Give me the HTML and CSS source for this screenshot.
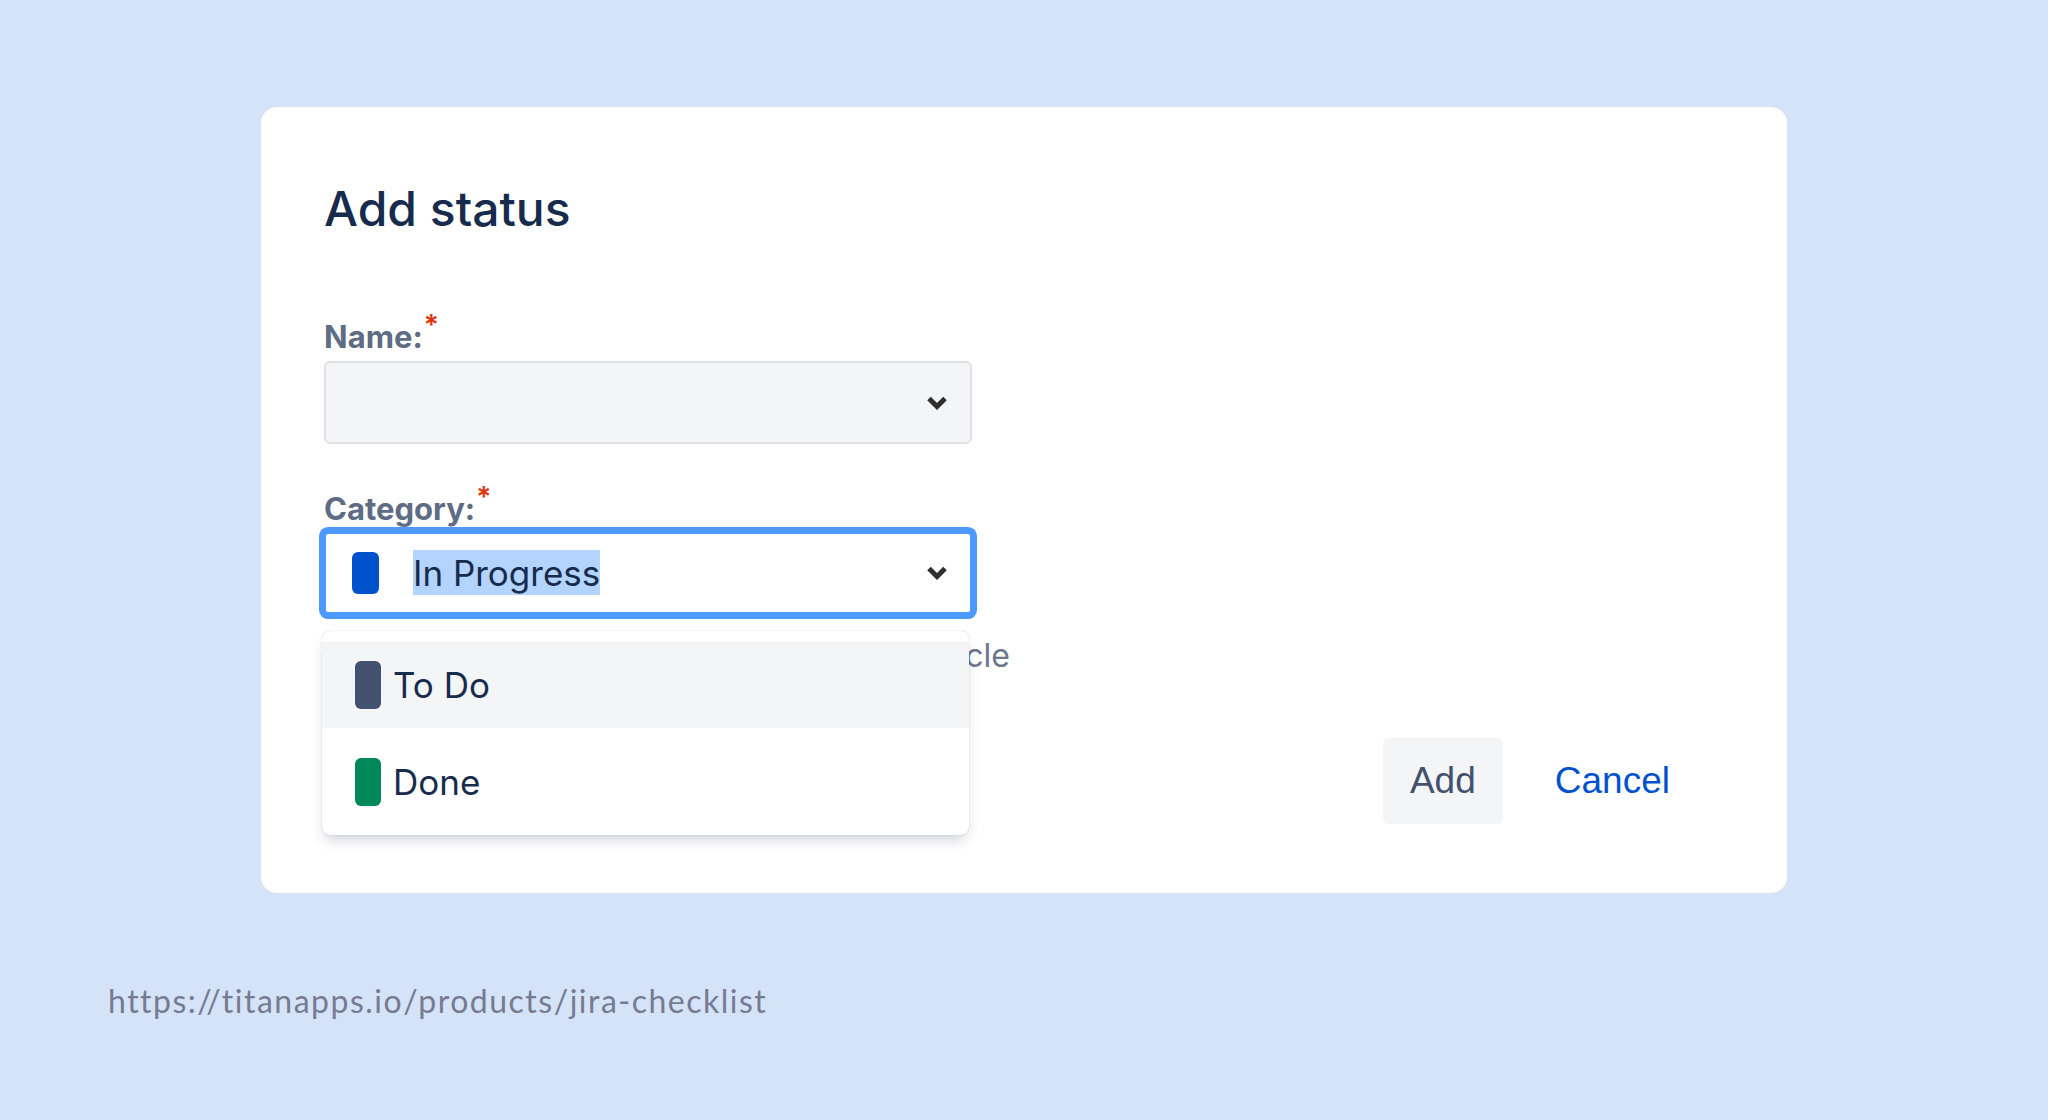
FILE: index.html
```html
<!DOCTYPE html>
<html lang="en">
<head>
    <meta charset="UTF-8">
    <meta name="viewport" content="width=device-width, initial-scale=1.0">
    <title>Add status</title>
    <link rel="stylesheet" href="styles.css">
</head>
<body>
    <div class="page">
        <section class="dialog">
            <h1 class="dialog-title">Add status</h1>

            <div class="field">
                <label class="field-label" for="statusName">Name:<span class="required">*</span></label>
                <div class="select" id="statusName">
                    <span class="select-value"></span>
                    <svg class="chevron" viewBox="0 0 22 16" width="22" height="16">
                        <polyline points="3,3.5 11,11.5 19,3.5" fill="none" stroke="#2f2f2f" stroke-width="5"/>
                    </svg>
                </div>
            </div>

            <div class="field field-category">
                <label class="field-label" for="statusCategory">Category:<span class="required">*</span></label>
                <div class="select select-focused" id="statusCategory">
                    <span class="swatch swatch-progress"></span>
                    <span class="select-value"><span class="selected-text">In Progress</span></span>
                    <svg class="chevron" viewBox="0 0 22 16" width="22" height="16">
                        <polyline points="3,3.5 11,11.5 19,3.5" fill="none" stroke="#2f2f2f" stroke-width="5"/>
                    </svg>
                </div>
                <p class="field-help">Category shows the stage in the lifecycle</p>

                <ul class="menu">
                    <li class="menu-item is-active"><span class="swatch swatch-todo"></span>To Do</li>
                    <li class="menu-item"><span class="swatch swatch-done"></span>Done</li>
                </ul>
            </div>

            <div class="actions">
                <button type="button" class="btn btn-add">Add</button>
                <button type="button" class="btn btn-link">Cancel</button>
            </div>
        </section>

        <p class="source">https://titanapps.io/products/jira-checklist</p>
    </div>
</body>
</html>
```

FILE: styles.css
```css
body {
    margin: 0;
    background-color: #d4e3f8;
    font-family: Inter, "Noto Sans", sans-serif;
    color: #172b4d;
}
.page {
    padding: 107px 0 0 108px;
}
.dialog {
    width: 1526px;
    height: 786px;
    box-sizing: border-box;
    margin-left: 153px;
    padding: 73px 97px 0 63px;
    background-color: #fff;
    border-radius: 16px;
    display: flex;
    flex-direction: column;
}
.dialog-title {
    margin: 0;
    font-size: 48px;
    line-height: 58px;
    font-weight: 500;
    color: #172b4d;
}
.field {
    width: 648px;
    display: flex;
    flex-direction: column;
}
.dialog-title + .field {
    margin-top: 69px;
}
.field-label {
    font-size: 31px;
    line-height: 36px;
    font-weight: 700;
    color: #5e6c84;
}
.required {
    font-size: 28px;
    color: #de350b;
    vertical-align: 13px;
    margin-left: 1px;
    font-weight: 600;
}
.select {
    height: 83px;
    margin-top: 6px;
    box-sizing: border-box;
    border: 2px solid #dfe1e6;
    border-radius: 6px;
    background-color: #f4f5f7;
    display: flex;
    align-items: center;
    padding: 0 22px 0 26px;
}
.select-value {
    flex: 1;
    font-size: 35px;
    line-height: 42px;
}
.chevron {
    display: block;
}
.field-category {
    position: relative;
    margin-top: 35px;
}
.select-focused {
    height: 82px;
    margin-top: 5px;
    background-color: #fff;
    border-color: #4c9aff;
    box-shadow: 0 0 0 5px #4c9aff;
    border-radius: 4px;
}
.select-focused .select-value {
    margin-left: 34px;
}
.selected-text {
    background-color: #b3d4ff;
    padding: 2px 0 1px;
}
.swatch {
    display: inline-block;
    width: 27px;
    height: 42px;
    border-radius: 6px;
    flex-shrink: 0;
}
.swatch-progress {
    background-color: #0052cc;
}
.swatch-todo {
    width: 26px;
    height: 48px;
    background-color: #42526e;
}
.swatch-done {
    width: 26px;
    height: 48px;
    background-color: #00875a;
}
.field-help {
    width: 686px;
    margin: 23px 0 0;
    font-size: 32px;
    line-height: 38px;
    color: #6b778c;
    white-space: nowrap;
    text-align: right;
}
.menu {
    position: absolute;
    top: 152px;
    left: -2px;
    width: 647px;
    margin: 0;
    padding: 11px 0 10px;
    list-style: none;
    background-color: #fff;
    border-radius: 8px;
    box-shadow: 0 8px 14px -4px rgba(9, 30, 66, 0.22), 0 0 1px rgba(9, 30, 66, 0.31);
}
.menu-item {
    height: 86px;
    display: flex;
    align-items: center;
    gap: 12px;
    padding-left: 33px;
    font-size: 35px;
    color: #172b4d;
}
.menu-item + .menu-item {
    margin-top: 11px;
}
.menu-item.is-active {
    background-color: #f4f5f7;
}
.actions {
    display: flex;
    justify-content: flex-end;
    align-items: center;
    gap: 32px;
    margin-top: 63px;
}
.btn {
    font-family: "Liberation Sans", Arial, sans-serif;
    font-size: 37px;
    height: 86px;
    border: none;
    border-radius: 6px;
    background: none;
    cursor: pointer;
}
.btn-add {
    width: 120px;
    background-color: #f4f5f7;
    color: #42526e;
}
.btn-link {
    padding: 0 20px;
    color: #0052cc;
}
.source {
    margin: 89px 0 0;
    font-family: Lato, "Open Sans", sans-serif;
    font-size: 32px;
    line-height: 38px;
    color: #767b91;
    letter-spacing: 1.5px;
}
```
